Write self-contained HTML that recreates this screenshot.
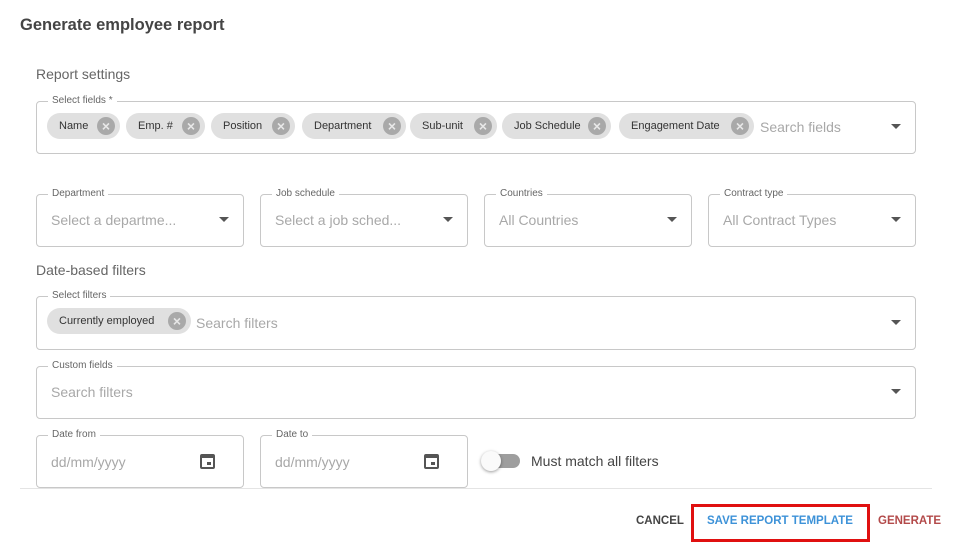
<!DOCTYPE html>
<html><head><style>
body{margin:0;width:953px;height:545px;background:#fff;font-family:"Liberation Sans",sans-serif;position:relative;overflow:hidden;color:#333}
.a{position:absolute}
.f{position:absolute;border:1px solid #c8c8c8;border-radius:4px;box-sizing:border-box}
.lb{position:absolute;top:-7px;left:11px;background:#fff;padding:0 4px;font-size:10px;color:#666;line-height:12px}
.ph{position:absolute;font-size:14px;color:#a8a8a8}
.arr{position:absolute;width:0;height:0;border-left:5px solid transparent;border-right:5px solid transparent;border-top:5px solid #555}
.chip{position:absolute;top:11px;height:26px;border-radius:13px;background:#e0e0e0;font-size:11px;color:#333;line-height:26px;padding-left:12px;box-sizing:border-box}
.chip i{position:absolute;right:5px;top:4px;width:18px;height:18px;border-radius:50%;background:#a9a9a9;color:#e8e8e8;font-style:normal;font-size:14px;line-height:18px;text-align:center;font-weight:bold}
.cal{position:absolute;width:15px;height:15px;border:2px solid #555;border-top-width:4px;border-radius:2px;box-sizing:border-box}
.cal:after{content:"";position:absolute;right:2px;bottom:2px;width:4px;height:3px;background:#555}
.btn{position:absolute;top:515px;font-size:11.5px;font-weight:bold}
</style></head><body>
<div class="a" style="left:20px;top:16px;font-size:16.5px;font-weight:bold;color:#444">Generate employee report</div>
<div class="a" style="left:36px;top:66px;font-size:14px;color:#666">Report settings</div>
<div class="f" style="left:36px;top:101px;width:880px;height:53px"><span class="lb">Select fields *</span>
<div class="chip" style="left:10px;width:73px">Name<i>×</i></div>
<div class="chip" style="left:89px;width:79px">Emp. #<i>×</i></div>
<div class="chip" style="left:174px;width:84px">Position<i>×</i></div>
<div class="chip" style="left:265px;width:104px">Department<i>×</i></div>
<div class="chip" style="left:373px;width:87px">Sub-unit<i>×</i></div>
<div class="chip" style="left:465px;width:109px">Job Schedule<i>×</i></div>
<div class="chip" style="left:582px;width:135px">Engagement Date<i>×</i></div>
<span class="ph" style="left:723px;top:17px">Search fields</span><span class="arr" style="left:854px;top:22px"></span></div>

<div class="f" style="left:36px;top:194px;width:208px;height:53px"><span class="lb">Department</span><span class="ph" style="left:14px;top:17px">Select a departme...</span><span class="arr" style="left:182px;top:22px"></span></div>
<div class="f" style="left:260px;top:194px;width:208px;height:53px"><span class="lb">Job schedule</span><span class="ph" style="left:14px;top:17px">Select a job sched...</span><span class="arr" style="left:182px;top:22px"></span></div>
<div class="f" style="left:484px;top:194px;width:208px;height:53px"><span class="lb">Countries</span><span class="ph" style="left:14px;top:17px">All Countries</span><span class="arr" style="left:182px;top:22px"></span></div>
<div class="f" style="left:708px;top:194px;width:208px;height:53px"><span class="lb">Contract type</span><span class="ph" style="left:14px;top:17px">All Contract Types</span><span class="arr" style="left:182px;top:22px"></span></div>

<div class="a" style="left:36px;top:262px;font-size:14px;color:#666">Date-based filters</div>
<div class="f" style="left:36px;top:296px;width:880px;height:54px"><span class="lb">Select filters</span>
<div class="chip" style="left:10px;width:144px">Currently employed<i>×</i></div>
<span class="ph" style="left:159px;top:18px">Search filters</span><span class="arr" style="left:854px;top:23px"></span></div>
<div class="f" style="left:36px;top:366px;width:880px;height:53px"><span class="lb">Custom fields</span><span class="ph" style="left:14px;top:17px">Search filters</span><span class="arr" style="left:854px;top:22px"></span></div>

<div class="f" style="left:36px;top:435px;width:208px;height:53px"><span class="lb">Date from</span><span class="ph" style="left:14px;top:18px">dd/mm/yyyy</span><span class="cal" style="left:163px;top:18px"></span></div>
<div class="f" style="left:260px;top:435px;width:208px;height:53px"><span class="lb">Date to</span><span class="ph" style="left:14px;top:18px">dd/mm/yyyy</span><span class="cal" style="left:163px;top:18px"></span></div>
<div class="a" style="left:484px;top:454px;width:36px;height:14px;border-radius:7px;background:#9e9e9e"></div>
<div class="a" style="left:481px;top:451px;width:20px;height:20px;border-radius:50%;background:#fafafa;box-shadow:0 1px 3px rgba(0,0,0,.4)"></div>
<div class="a" style="left:531px;top:453px;font-size:14px;color:#444">Must match all filters</div>
<div class="a" style="left:20px;top:488px;width:912px;height:1px;background:#e4e4e4"></div>

<div class="btn" style="left:636px;color:#444">CANCEL</div>
<div class="a" style="left:691px;top:504px;width:179px;height:38px;border:3px solid #e01010;box-sizing:border-box"></div>
<div class="btn" style="left:707px;color:#3d92d8">SAVE REPORT TEMPLATE</div>
<div class="btn" style="left:878px;color:#b34a4a">GENERATE</div>
</body></html>
